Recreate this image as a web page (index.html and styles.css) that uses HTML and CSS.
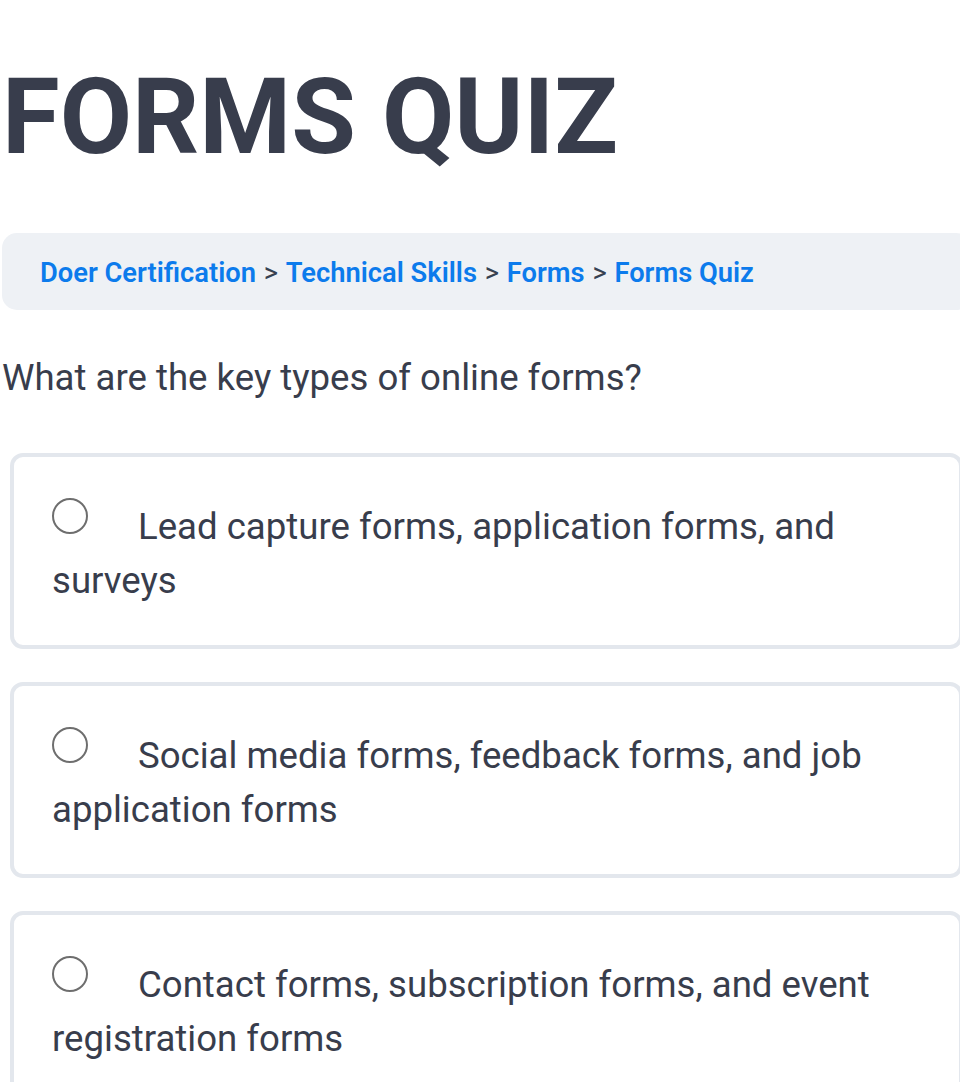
FILE: index.html
```html
<!DOCTYPE html>
<html lang="en">

<head>
  <meta charset="UTF-8">
  <meta name="viewport" content="width=device-width, initial-scale=1.0">
  <title>Forms Quiz</title>
  <link rel="stylesheet" href="styles.css">
</head>

<body>
  <main class="page">
    <h1 class="title">FORMS QUIZ</h1>

    <nav class="crumbs">
      <a href="#">Doer Certification</a>
      <span class="sep">&gt;</span>
      <a href="#">Technical Skills</a>
      <span class="sep">&gt;</span>
      <a href="#">Forms</a>
      <span class="sep">&gt;</span>
      <a href="#">Forms Quiz</a>
    </nav>

    <p class="question">What are the key types of online forms?</p>

    <ul class="options">
      <li class="option"><span class="radio"></span>Lead capture forms, application forms, and surveys</li>
      <li class="option"><span class="radio"></span>Social media forms, feedback forms, and job application forms</li>
      <li class="option"><span class="radio"></span>Contact forms, subscription forms, and event registration forms</li>
    </ul>
  </main>
</body>

</html>
```

FILE: styles.css
```css
* {
  margin: 0;
  padding: 0;
  box-sizing: border-box;
}

html,
body {
  overflow: hidden;
}

body {
  background: #fff;
  font-family: Roboto, "Liberation Sans", sans-serif;
  color: #374151;
}

.page {
  width: 969px;
  margin-left: 2px;
}

.title {
  font-size: 105px;
  font-weight: 700;
  line-height: 1;
  color: #383d4c;
  padding-top: 65px;
}

.crumbs {
  margin-top: 63px;
  background: #eef1f5;
  border-radius: 15px;
  padding: 19px 38px 16px;
  font-size: 27.3px;
  line-height: 42px;
}

.crumbs a {
  color: #0c7bec;
  font-weight: 600;
  text-decoration: none;
}

.crumbs .sep {
  color: #374151;
  margin: 0 1px;
}

.question {
  margin-top: 42px;
  font-size: 36.6px;
  line-height: 51px;
  color: #383d4c;
}

.options {
  list-style: none;
  margin-top: 50px;
}

.option {
  margin: 0 8px 33px;
  border: 4px solid #e3e7ed;
  border-radius: 13px;
  padding: 41px 38px 37px;
  font-size: 36.6px;
  line-height: 54px;
  color: #383d4c;
}

.radio {
  display: inline-block;
  width: 36px;
  height: 36px;
  border: 2.5px solid #6e6e6e;
  border-radius: 50%;
  margin: 0 50px 5px 0;
}
```
